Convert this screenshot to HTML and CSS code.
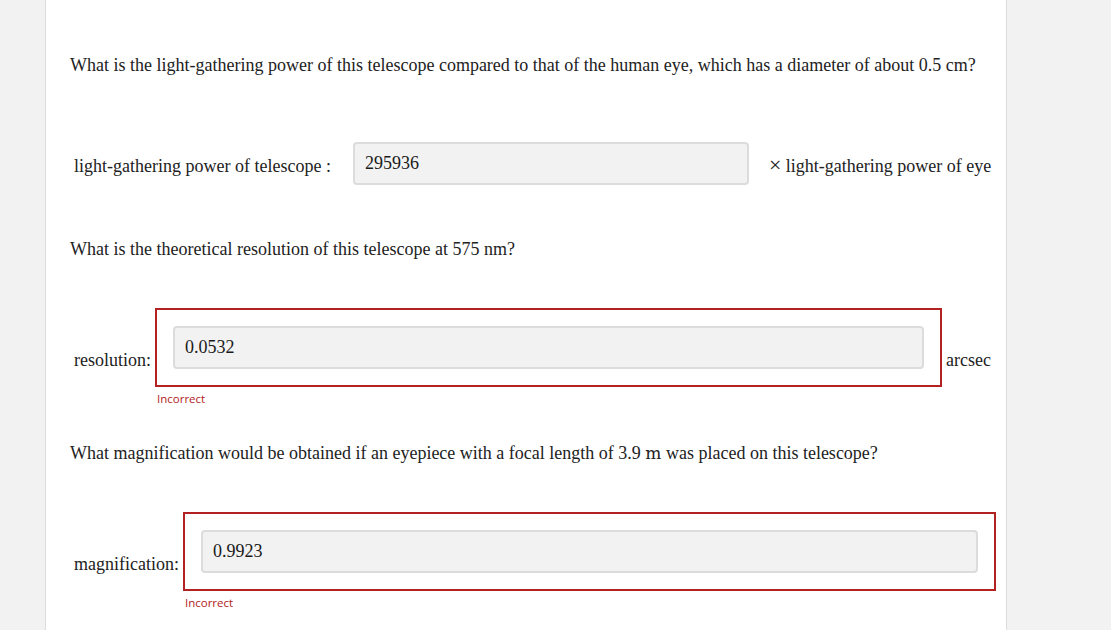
FILE: index.html
```html
<!DOCTYPE html>
<html lang="en">
<head>
  <meta charset="UTF-8">
  <title>Telescope Questions</title>
  <link rel="stylesheet" href="styles.css">
</head>
<body>
  <div class="panel">
    <p class="question">What is the light-gathering power of this telescope compared to that of the human eye, which has a diameter of about 0.5 cm?</p>
    <div class="answer-row row-plain">
      <span class="label">light-gathering power of telescope :</span>
      <div class="field-wrap">
        <div class="field field-fixed">
          <input type="text" class="answer-input" value="295936" readonly>
        </div>
      </div>
      <span class="unit"><span class="times">&times;</span> light-gathering power of eye</span>
    </div>

    <p class="question">What is the theoretical resolution of this telescope at 575 nm?</p>
    <div class="answer-row">
      <span class="label">resolution:</span>
      <div class="field-wrap grow">
        <div class="field incorrect">
          <input type="text" class="answer-input" value="0.0532" readonly>
        </div>
        <div class="feedback">Incorrect</div>
      </div>
      <span class="unit">arcsec</span>
    </div>

    <p class="question">What magnification would be obtained if an eyepiece with a focal length of 3.9 <span class="math">m</span> was placed on this telescope?</p>
    <div class="answer-row">
      <span class="label">magnification:</span>
      <div class="field-wrap grow">
        <div class="field incorrect">
          <input type="text" class="answer-input" value="0.9923" readonly>
        </div>
        <div class="feedback">Incorrect</div>
      </div>
    </div>
  </div>
</body>
</html>
```

FILE: styles.css
```css
body {
  margin: 0;
  background: #f2f2f2;
  font-family: 'Liberation Serif', 'Times New Roman', serif;
  color: #222;
  font-size: 18px;
}
.panel {
  margin-left: 45px;
  width: 962px;
  box-sizing: border-box;
  min-height: 630px;
  background: #fff;
  border-left: 1px solid #dcdcdc;
  border-right: 1px solid #dcdcdc;
  padding: 53px 10px 0 24px;
}
.question {
  margin: 0 0 47px;
  line-height: 24px;
}
.answer-row {
  display: flex;
  align-items: flex-start;
  gap: 4px;
  padding-left: 4px;
  margin-bottom: 35px;
}
.answer-row.row-plain {
  margin-bottom: 34px;
}
.label {
  line-height: 24px;
  margin-top: 40px;
  white-space: nowrap;
}
.row-plain .label,
.row-plain .unit {
  margin-top: 30px;
}
.unit {
  line-height: 24px;
  margin-top: 40px;
  margin-right: 5px;
  white-space: nowrap;
}
.times {
  font-size: 22px;
  line-height: 0;
  margin-left: -2px;
}
.field-wrap.grow {
  flex: 1;
}
.field {
  border: 2px solid transparent;
  padding: 16px;
}
.field-fixed {
  width: 396px;
}
.field.incorrect {
  border-color: #b22222;
}
.answer-input {
  display: block;
  width: 100%;
  box-sizing: border-box;
  height: 43px;
  padding: 0 10px;
  font-family: 'Liberation Serif', 'Times New Roman', serif;
  font-size: 18px;
  color: #1a1a1a;
  background: #f2f2f2;
  border: 2px solid #dcdcdc;
  border-radius: 4px;
  outline: none;
}
.feedback {
  font-family: 'Open Sans', 'Noto Sans', sans-serif;
  font-size: 11.5px;
  line-height: 14px;
  color: #b22222;
  margin-top: 5px;
  padding-left: 2px;
}
.math {
  font-family: 'DejaVu Serif', serif;
  font-size: 17px;
}
```
